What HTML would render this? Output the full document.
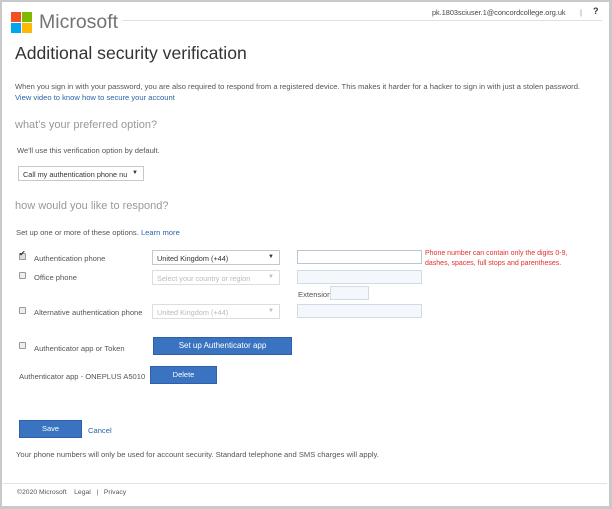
<!DOCTYPE html>
<html><head><meta charset="utf-8"><style>
*{margin:0;padding:0;box-sizing:border-box}
body{width:612px;height:509px;background:#fff;font-family:"Liberation Sans",sans-serif;position:relative;overflow:hidden;color:#444}
.frame{position:absolute;left:0;top:0;width:612px;height:509px;border:3px solid #c9c9c9;border-top-width:2px;border-left-width:2px}
.a{position:absolute;white-space:nowrap}
.s{font-size:7.6px;color:#555}
.h2{font-size:11px;color:#999}
.sel{position:absolute;border:1px solid #c8c8c8;background:#fff;font-size:7.3px;color:#333;padding:3px 4px;height:15px}
.sel i{position:absolute;right:5px;top:3px;font-style:normal;font-size:6px}
.dis{color:#bbb;border-color:#ddd}
.inp{position:absolute;border:1px solid #b9c6d3;background:#fff;height:14px}
.inp.d{background:#f4f8fc;border-color:#d0dbe6}
.cb{position:absolute;width:7px;height:7px;border:1px solid #999;background:#eee;border-radius:1px}
.btn{position:absolute;background:#3a73c0;color:#fff;font-size:8px;text-align:center;border:1px solid #2e5fa8}
.link{color:#2a63a8}
</style></head><body>
<div class="frame"></div>
<div class="a" style="left:11px;top:12px;width:10px;height:10px;background:#f25022"></div>
<div class="a" style="left:22px;top:12px;width:10px;height:10px;background:#7fba00"></div>
<div class="a" style="left:11px;top:23px;width:10px;height:10px;background:#00a4ef"></div>
<div class="a" style="left:22px;top:23px;width:10px;height:10px;background:#ffb900"></div>
<div class="a" style="left:39px;top:11px;font-size:19.5px;color:#737373">Microsoft</div>
<div class="a" style="left:122px;top:20px;width:480px;height:1px;background:#e0e0e0"></div>
<div class="a s" style="left:432px;top:8px;color:#444;font-size:7.3px">pk.1803sciuser.1@concordcollege.org.uk</div>
<div class="a s" style="left:580px;top:8px;color:#888">|</div>
<div class="a" style="left:593px;top:6px;font-size:9px;font-weight:bold;color:#333">?</div>
<div class="a" style="left:15px;top:43px;font-size:17.6px;color:#333">Additional security verification</div>
<div class="a s" style="left:15px;top:82px">When you sign in with your password, you are also required to respond from a registered device. This makes it harder for a hacker to sign in with just a stolen password.</div>
<div class="a s link" style="left:15px;top:93px">View video to know how to secure your account</div>
<div class="a h2" style="left:15px;top:119px">what's your preferred option?</div>
<div class="a s" style="left:17px;top:146px">We'll use this verification option by default.</div>
<div class="sel" style="left:18px;top:166px;width:126px">Call my authentication phone nu<i>▼</i></div>
<div class="a h2" style="left:15px;top:200px">how would you like to respond?</div>
<div class="a s" style="left:16px;top:228px">Set up one or more of these options. <span class="link">Learn more</span></div>

<div class="cb" style="left:19px;top:253px;background:#ddd"></div><div class="a" style="left:19px;top:249px;font-size:8px;color:#333">✔</div>
<div class="a s" style="left:34px;top:254px">Authentication phone</div>
<div class="sel" style="left:152px;top:250px;width:128px">United Kingdom (+44)<i>▼</i></div>
<div class="inp" style="left:297px;top:250px;width:125px"></div>
<div class="a s" style="left:425px;top:250px;color:#e03030;font-size:7px">Phone number can contain only the digits 0-9,</div>
<div class="a s" style="left:425px;top:260px;color:#e03030;font-size:7px">dashes, spaces, full stops and parentheses.</div>

<div class="cb" style="left:19px;top:272px"></div>
<div class="a s" style="left:34px;top:273px">Office phone</div>
<div class="sel dis" style="left:152px;top:270px;width:128px">Select your country or region<i>▼</i></div>
<div class="inp d" style="left:297px;top:270px;width:125px"></div>
<div class="a s" style="left:298px;top:290px">Extension</div>
<div class="inp d" style="left:330px;top:286px;width:39px"></div>

<div class="cb" style="left:19px;top:307px"></div>
<div class="a s" style="left:34px;top:308px">Alternative authentication phone</div>
<div class="sel dis" style="left:152px;top:304px;width:128px">United Kingdom (+44)<i>▼</i></div>
<div class="inp d" style="left:297px;top:304px;width:125px"></div>

<div class="cb" style="left:19px;top:342px"></div>
<div class="a s" style="left:34px;top:344px">Authenticator app or Token</div>
<div class="btn" style="left:153px;top:337px;width:139px;height:18px;line-height:16px">Set up Authenticator app</div>
<div class="a s" style="left:19px;top:372px">Authenticator app - ONEPLUS A5010</div>
<div class="btn" style="left:150px;top:366px;width:67px;height:18px;line-height:16px;font-size:7.5px">Delete</div>

<div class="btn" style="left:19px;top:420px;width:63px;height:18px;line-height:16px;font-size:7.5px">Save</div>
<div class="a s link" style="left:88px;top:426px">Cancel</div>
<div class="a s" style="left:16px;top:450px">Your phone numbers will only be used for account security. Standard telephone and SMS charges will apply.</div>
<div class="a" style="left:2px;top:483px;width:605px;height:1px;background:#e3e3e3"></div>
<div class="a s" style="left:17px;top:489px;font-size:6.8px">©2020 Microsoft &nbsp;&nbsp; Legal &nbsp;&nbsp;| &nbsp;&nbsp;Privacy</div>
</body></html>
